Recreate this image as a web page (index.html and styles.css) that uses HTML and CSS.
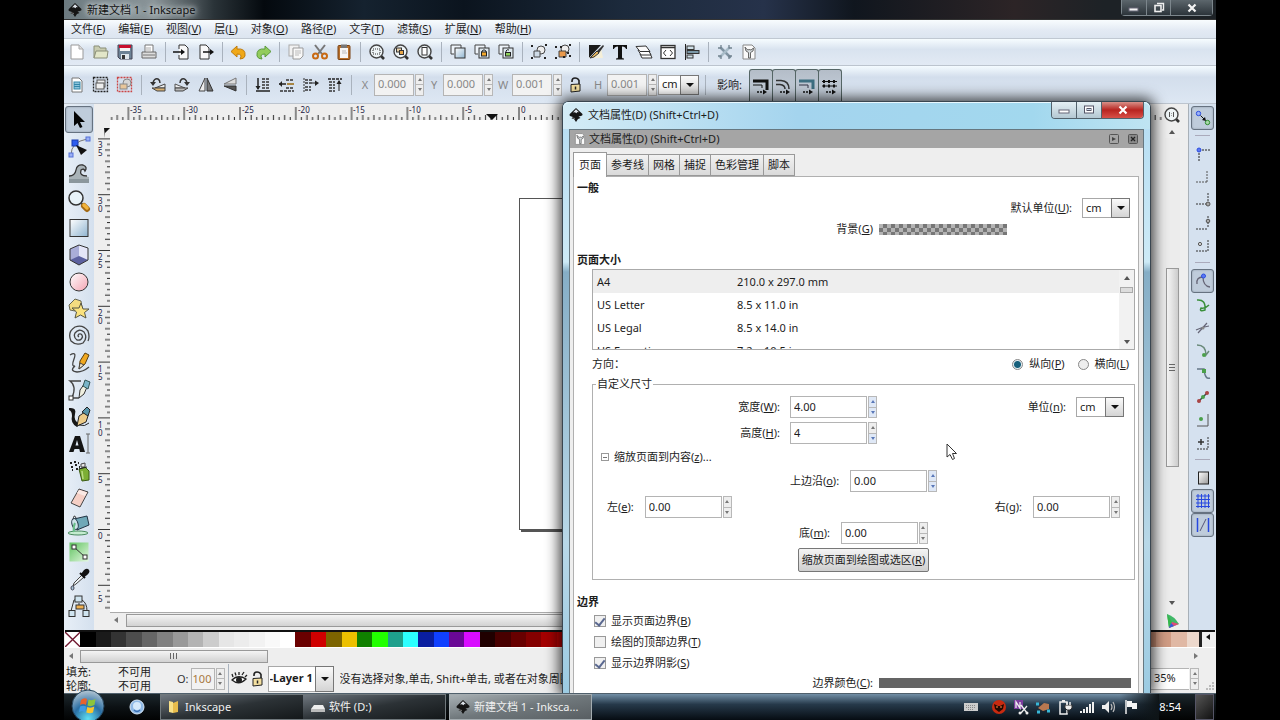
FILE: index.html
```html
<!DOCTYPE html>
<html lang="zh-CN">
<head>
<meta charset="utf-8">
<title>新建文档 1 - Inkscape</title>
<link rel="stylesheet" href="styles.css">
</head>
<body>
<svg width="0" height="0" class="defs" aria-hidden="true">
  <defs>
    <linearGradient id="gb" x1="0" y1="0" x2="1" y2="1"><stop offset="0" stop-color="#fff"/><stop offset="1" stop-color="#8fb4d0"/></linearGradient>
    <linearGradient id="gp" x1="0" y1="0" x2="1" y2="1"><stop offset="0" stop-color="#fff"/><stop offset="1" stop-color="#f3a3b2"/></linearGradient>
    <linearGradient id="gg" x1="0" y1="0" x2="1" y2="1"><stop offset="0" stop-color="#5fc25f"/><stop offset="1" stop-color="#e4f8e0"/></linearGradient>
    <linearGradient id="gw" x1="0" y1="0" x2="1" y2="1"><stop offset="0" stop-color="#fff"/><stop offset="1" stop-color="#999"/></linearGradient>
    <symbol id="ink" viewBox="0 0 14 14"><path d="M7 0L13.500 6Q14 7.500 12 8L9.500 8.500L11.500 10L9 11L7 14L5 11L2.500 10.500L4 9L1 8Q0 7 .8 6Z" fill="#151515"/><path d="M7 1.300L10 4.300L8.500 4L7.300 5.300L6 4.300L4 4.600Z" fill="#dde3ea"/><path d="M3 9.800L6 10.500" stroke="#777"/></symbol>
    <symbol id="lock" viewBox="0 0 18 18"><path d="M5 6V5Q5 2 8 2T12 4.500V8" fill="none" stroke="#222" stroke-width="1.600"/><path d="M4 8.500L13 8V15L4 16Z" fill="#f3dfa0" stroke="#222"/><path d="M8.500 10.500V13.500" stroke="#222" stroke-width="1.500"/></symbol>
    <symbol id="lens" viewBox="0 0 18 18"><path d="M12.500 12.500L16 16" stroke="#333" stroke-width="2.600"/><circle cx="8.500" cy="8.500" r="6.500" fill="#eef4f6" stroke="#444" stroke-width="1.400"/></symbol>
    <symbol id="docprefs" viewBox="0 0 18 18"><path d="M3 2H12L15 5V16H3Z" fill="#fafafa" stroke="#888"/><path d="M5 4L6 8L8.500 9.500V15H10.500V9.500L13 8L13.500 5L11 7L9 6.500L8 7L6.500 6Z" fill="#d7dde0" stroke="#666"/></symbol>
  </defs>
</svg>

<div class="screen">
  <header class="titlebar">
    <svg class="i14"><use href="#ink"/></svg><span class="glow">新建文档 1 - Inkscape</span>
    <div class="winbtns">
      <button aria-label="最小化"><svg width="12" height="10"><rect x="1" y="5" width="9" height="3" fill="#f4f4f4" stroke="#667"/></svg></button>
      <button aria-label="还原"><svg width="12" height="12"><path d="M4 1.500H10.500V8H9" fill="none" stroke="#eee" stroke-width="1.400"/><rect x="2" y="3.500" width="6" height="6" fill="none" stroke="#eee" stroke-width="1.600"/></svg></button>
      <button class="wide" aria-label="关闭"><svg width="12" height="10"><path d="M2.500 1.500L9.500 8.500M9.500 1.500L2.500 8.500" stroke="#f4f4f4" stroke-width="2.200"/></svg></button>
    </div>
  </header>

  <nav class="menubar">
    <button>文件(<u>F</u>)</button><button>编辑(<u>E</u>)</button><button>视图(<u>V</u>)</button><button>层(<u>L</u>)</button><button>对象(<u>O</u>)</button><button>路径(<u>P</u>)</button><button>文字(<u>T</u>)</button><button>滤镜(<u>S</u>)</button><button>扩展(<u>N</u>)</button><button>帮助(<u>H</u>)</button>
  </nav>

  <div class="bar cmds">
    <button aria-label="新建"><svg><path d="M3 2H11L15 6V16H3Z" fill="#fff" stroke="#999"/><path d="M11 2V6H15" fill="#ddd" stroke="#aaa"/></svg></button>
    <button aria-label="打开"><svg><path d="M2 15V3H7L8 5H14V9" fill="#c8ccb0" stroke="#8a8f78"/><path d="M4 8H16L15 15H2Z" fill="#e2e6c8" stroke="#8a8f78"/></svg></button>
    <button aria-label="保存"><svg><path d="M2 2H16V16H4L2 14Z" fill="#6d8295" stroke="#445"/><path d="M4 2H14V8H4Z" fill="#f4f4f4"/><path d="M3 2H15V5H3Z" fill="#c8102e"/><path d="M5 11H13V16H5Z" fill="#dfe6ec"/><path d="M6 12H9V16H6Z" fill="#333"/></svg></button>
    <button aria-label="打印"><svg><path d="M5 9V2H13V9" fill="#fff" stroke="#777"/><path d="M2 9H16V15H2Z" fill="#ddd" stroke="#666"/><path d="M3 12H15" stroke="#777"/><path d="M6 5H11M6 7H11" stroke="#aaa"/></svg></button>
    <i class="sep"></i>
    <button aria-label="导入"><svg><path d="M6 6V2H12L15 5V16H6V12" fill="#f8f8f8" stroke="#333"/><path d="M0 9H9" stroke="#111" stroke-width="1.500"/><path d="M8 6L12 9L8 12Z" fill="#111"/></svg></button>
    <button aria-label="导出"><svg><path d="M3 2H9L12 5V16H3Z" fill="#f8f8f8" stroke="#333"/><path d="M6 9H14" stroke="#111" stroke-width="1.500"/><path d="M13 6L17 9L13 12Z" fill="#111"/></svg></button>
    <i class="sep"></i>
    <button aria-label="撤销"><svg><path d="M7 3V6Q16 5 15 13Q14 16 10 16Q13 11 7 11V14L1 8.500Z" fill="#f0a818" stroke="#bf7c0c"/></svg></button>
    <button aria-label="重做"><svg><path d="M11 3V6Q2 5 3 13Q4 16 8 16Q5 11 11 11V14L17 8.500Z" fill="#93cc5c" stroke="#5b9a3c"/></svg></button>
    <i class="sep"></i>
    <button aria-label="复制"><svg><rect x="2" y="2" width="10" height="11" fill="#f2f2f2" stroke="#aaa"/><path d="M6 5H16V13L13 16H6Z" fill="#f8f8f8" stroke="#999"/><path d="M8 8H14M8 10H14M8 12H12" stroke="#bbb"/></svg></button>
    <button aria-label="剪切"><svg><path d="M4 2L11 11M14 2L7 11" stroke="#777" stroke-width="2"/><circle cx="4.500" cy="13" r="2.500" fill="none" stroke="#c86a14" stroke-width="2"/><circle cx="13.500" cy="13" r="2.500" fill="none" stroke="#c86a14" stroke-width="2"/></svg></button>
    <button aria-label="粘贴"><svg><rect x="3" y="2.500" width="12" height="14" rx="1" fill="#b8702c" stroke="#7a4314"/><path d="M5 5H13V15H5Z" fill="#f6f6f6"/><path d="M6 1.500H12V5H6Z" fill="#777"/><path d="M7 8H11M7 10H12" stroke="#bbb"/></svg></button>
    <i class="sep"></i>
    <button aria-label="缩放选区"><svg><use href="#lens"/><rect x="5" y="6" width="7" height="5" fill="none" stroke="#333" stroke-dasharray="1 1"/></svg></button>
    <button aria-label="缩放绘图"><svg><use href="#lens"/><rect x="4.500" y="5" width="5" height="4" fill="#e6cfa8" stroke="#333"/><rect x="7.500" y="7.500" width="4" height="4" fill="#e8a548" stroke="#333"/></svg></button>
    <button aria-label="缩放页面"><svg><use href="#lens"/><rect x="6" y="4.500" width="5" height="7.500" fill="#fff" stroke="#333"/></svg></button>
    <i class="sep"></i>
    <button aria-label="再制"><svg><path d="M5 11H2V2H12V5" fill="#eef4fa" stroke="#444"/><rect x="6" y="5" width="10" height="10" fill="url(#gb)" stroke="#333"/></svg></button>
    <button aria-label="克隆"><svg><path d="M5 11H2V2H12V5" fill="#eef4fa" stroke="#444"/><rect x="6" y="5" width="10" height="10" fill="#dfe9ef" stroke="#333"/><path d="M9 9V8Q11 5.500 13 8V9" fill="none" stroke="#222"/><rect x="8.500" y="9" width="5" height="4" fill="#f3a82c" stroke="#222"/></svg></button>
    <button aria-label="断开克隆"><svg><path d="M5 11H2V2H12V5" fill="#eef4fa" stroke="#444"/><rect x="6" y="5" width="10" height="10" fill="#dfe9ef" stroke="#333"/><path d="M9 9V8Q10 6 12 7" fill="none" stroke="#222"/><rect x="8.500" y="9.500" width="5" height="3.500" fill="#8fd05a" stroke="#222"/></svg></button>
    <i class="sep"></i>
    <button aria-label="群组"><svg><circle cx="11" cy="7" r="4" fill="#eee" stroke="#444"/><path d="M4 8H10V14H4Z" fill="#cfdbe6" stroke="#444"/><path d="M1 2H3V4H1ZM15 1H17V3H15ZM1 14H3V16H1ZM14 14H16V16H14Z" fill="#222"/></svg></button>
    <button aria-label="解散群组"><svg><circle cx="11" cy="6" r="4" fill="#eee" stroke="#444"/><path d="M5 8H12V14H5Z" fill="#e99a4d" stroke="#444"/><path d="M1 3H3V5H1ZM6 3H8V5H6ZM15 1H17V3H15ZM1 14H3V16H1ZM15 12H17V14H15ZM9 13H11V15H9ZM13 9H15V11H13Z" fill="#222"/></svg></button>
    <i class="sep"></i>
    <button aria-label="填充和轮廓"><svg><path d="M2 2H14L2 15Z" fill="#1a1a1a"/><path d="M2 15L14 5L16 15Z" fill="#f5efd8"/><path d="M3 15L10 8L12 10L7 14Z" fill="#e8b860" stroke="#333"/><path d="M10 8L16 2L17 3L12 10Z" fill="#333"/></svg></button>
    <button aria-label="文字和字体"><svg><path d="M2 2H16V6H15Q14.500 3.500 11 3.500V14.500Q11 15.500 13 15.500V16.500H5V15.500Q7 15.500 7 14.500V3.500Q3.500 3.500 3 6H2Z" fill="#111"/></svg></button>
    <button aria-label="图层"><svg><path d="M5 11L15 10L17 15H7Z" fill="#fff" stroke="#333"/><path d="M3 7L13 6.500L16 12H6Z" fill="#fff" stroke="#333"/><path d="M1 3.500L11 3L15 8.500H5Z" fill="#fafafa" stroke="#333"/></svg></button>
    <button aria-label="XML编辑器"><svg><rect x="2" y="2.500" width="14" height="13" fill="#fff" stroke="#333" stroke-width="1.300"/><path d="M2 4.500H16" stroke="#333" stroke-width="1.500"/><path d="M7 7L4.500 10L7 13M11 7L13.500 10L11 13" fill="none" stroke="#333"/></svg></button>
    <button aria-label="对齐和分布"><svg><path d="M2.500 1V17" stroke="#222"/><rect x="4" y="3" width="7" height="3.500" fill="#cfe0e8" stroke="#333"/><rect x="4" y="7.500" width="12" height="3" fill="#7a98a8" stroke="#333"/><rect x="4" y="12" width="6" height="3" fill="#cfe0e8" stroke="#333"/></svg></button>
    <i class="sep"></i>
    <button aria-label="首选项"><svg><path d="M5 5L14 14" stroke="#8094a2" stroke-width="2.500" stroke-linecap="round"/><path d="M13 5L4 14" stroke="#a8bcc8" stroke-width="2.500" stroke-linecap="round"/><path d="M2 5L5 5L5 2M13 2V5H16M2 13H5V16M13 16V13H16" fill="none" stroke="#71838f" stroke-width="1.300"/></svg></button>
    <button aria-label="文档属性"><svg><use href="#docprefs"/></svg></button>
  </div>

  <div class="bar ctrl">
    <button aria-label="全选"><svg><path d="M4 2H11L14 5V16H4Z" fill="#fff" stroke="#777"/><rect x="6" y="6" width="6" height="7" fill="#8cc4dc" stroke="#3486a8"/><path d="M6 8.500H12M6 10.500H12" stroke="#3486a8"/></svg></button>
    <button aria-label="全部图层"><svg><rect x="1.500" y="1.500" width="14" height="14" fill="none" stroke="#222" stroke-width="1.300" stroke-dasharray="2 1"/><rect x="5" y="4" width="8" height="7" fill="#eee" stroke="#555"/><rect x="4" y="7" width="8" height="6" fill="#eee" stroke="#555"/></svg></button>
    <button aria-label="取消选择"><svg><rect x="1.500" y="1.500" width="14" height="14" fill="none" stroke="#c44" stroke-width="1.300" stroke-dasharray="2 1"/><circle cx="11" cy="7" r="4" fill="#d5d5d5" stroke="#888"/><rect x="4" y="8" width="7" height="5" fill="#e8c69a" stroke="#888"/></svg></button>
    <i class="sep"></i>
    <button aria-label="逆时针旋转"><svg><path d="M4 7Q5 2 9 3Q11 4 11 7" fill="none" stroke="#333" stroke-width="1.500"/><path d="M1 6H7L4 10Z" fill="#333"/><path d="M6 12L16 8V12Z" fill="#eee" stroke="#444"/><path d="M3 12H16V15H8Z" fill="#d8b070" stroke="#444"/></svg></button>
    <button aria-label="顺时针旋转"><svg><path d="M7 7Q7 4 9 3Q13 2 14 7" fill="none" stroke="#333" stroke-width="1.500"/><path d="M11 6H17L14 10Z" fill="#333"/><path d="M2 8L12 12H2Z" fill="#eee" stroke="#555"/><path d="M2 12H15L10 15H2Z" fill="#bbb" stroke="#444"/></svg></button>
    <button aria-label="水平翻转"><svg><path d="M8 2V15H2Z" fill="#eee" stroke="#444"/><path d="M10 2V15H16Z" fill="#777" stroke="#333"/></svg></button>
    <button aria-label="垂直翻转"><svg><path d="M15 2V8H3Z" fill="#ddd" stroke="#777"/><path d="M15 10V15L3 10Z" fill="#555" stroke="#333"/></svg></button>
    <i class="sep"></i>
    <button aria-label="置底"><svg><path d="M4 2V13" stroke="#222" stroke-width="1.500"/><path d="M1.500 10H6.500L4 14Z" fill="#222"/><path d="M8 3H15M8 6H15M8 9H15M8 12H15" stroke="#333" stroke-width="1.600" stroke-dasharray="3 1"/><path d="M2 15H16" stroke="#222" stroke-width="1.500"/></svg></button>
    <button aria-label="下移"><svg><path d="M1 8H8" stroke="#222" stroke-width="1.500"/><path d="M4 5L1 8L4 11Z" fill="#222"/><path d="M8 4H16M8 12H16M2 15H16" stroke="#333" stroke-width="1.600" stroke-dasharray="3 1"/><path d="M9 8H16" stroke="#a98643" stroke-width="2"/></svg></button>
    <button aria-label="上移"><svg><path d="M2 2V16" stroke="#333" stroke-dasharray="2 1"/><path d="M3 4H10M3 7H10M3 11H9M3 14H9" stroke="#333" stroke-width="1.600" stroke-dasharray="3 1"/><path d="M10 7H15" stroke="#222"/><path d="M13 4.500L17 7L13 10Z" fill="#222"/></svg></button>
    <button aria-label="置顶"><svg><path d="M2 3H16" stroke="#222" stroke-width="1.600" stroke-dasharray="3 1"/><path d="M3 6H9M3 9H9M3 12H9M3 15H9" stroke="#333" stroke-width="1.600" stroke-dasharray="3 1"/><path d="M13 5V15" stroke="#222"/><path d="M10.500 8H15.500L13 4Z" fill="#222"/></svg></button>
    <i class="sep"></i>
    <label class="field dim"><b>X</b><span class="spin s40"><input value="0.000"><span class="steps"><i></i><i></i></span></span></label>
    <label class="field dim"><b>Y</b><span class="spin s40"><input value="0.000"><span class="steps"><i></i><i></i></span></span></label>
    <label class="field dim"><b>W</b><span class="spin s40"><input value="0.001"><span class="steps"><i></i><i></i></span></span></label>
    <button aria-label="锁定比例" class="lockbtn"><svg><use href="#lock"/></svg></button>
    <label class="field dim"><b>H</b><span class="spin s40"><input value="0.001"><span class="steps"><i></i><i></i></span></span></label>
    <span class="drop"><select aria-label="单位"><option>cm</option></select></span>
    <i class="sep late"></i>
    <span class="affect">影响:</span>
    <div class="toggles">
      <button aria-label="缩放轮廓"><svg><path d="M1 3H15V12" fill="none" stroke="#111" stroke-width="3"/><path d="M1 7H10V10" fill="none" stroke="#111"/><path d="M5 14H11" stroke="#111" stroke-dasharray="2 1" stroke-width="1.500"/><path d="M11 11.500L15 14L11 16.500Z" fill="#111"/></svg></button>
      <button aria-label="缩放圆角"><svg><path d="M1 2.500H6Q14 3 14 11M1 6.500H5Q10 7 10 11" fill="none" stroke="#333" stroke-width="1.500"/><path d="M5 14H11" stroke="#111" stroke-dasharray="2 1" stroke-width="1.500"/><path d="M11 11.500L15 14L11 16.500Z" fill="#111"/></svg></button>
      <button aria-label="移动渐变"><svg><path d="M1 3H15V11" fill="none" stroke="#3d6e80" stroke-width="3"/><path d="M1 7H10V10" fill="none" stroke="#334"/><path d="M5 14H11" stroke="#111" stroke-dasharray="2 1" stroke-width="1.500"/><path d="M11 11.500L15 14L11 16.500Z" fill="#111"/></svg></button>
      <button aria-label="移动图案"><svg><path d="M1 3.500H16M1 8H16" stroke="#111"/><path d="M2 2H4V5H2ZM7 2H9V5H7ZM12 2H14V5H12ZM2 6.500H4V9.500H2ZM7 6.500H9V9.500H7ZM12 6.500H14V9.500H12Z" fill="#111"/><path d="M5 14H11" stroke="#111" stroke-dasharray="2 1" stroke-width="1.500"/><path d="M11 11.500L15 14L11 16.500Z" fill="#111"/></svg></button>
    </div>
  </div>

  <main class="middle">
    <aside class="toolbox">
      <button class="on" aria-label="选择"><svg viewBox="0 0 24 24"><path d="M7 3V18L10.500 15L13 20L15.500 19L13 14H18Z" fill="#050505"/></svg></button>
      <button aria-label="节点"><svg viewBox="0 0 24 24"><path d="M4 20Q4 7 20 4" fill="none" stroke="#777"/><rect x="5" y="5" width="6" height="6" fill="#2c5cf0" stroke="#1a3cae"/><rect x="19" y="2" width="4" height="4" fill="#9bb0f4" stroke="#5470d8"/><rect x="2" y="18" width="4" height="4" fill="#9bb0f4" stroke="#5470d8"/><path d="M9 10L20 15L14 20Z" fill="#111"/></svg></button>
      <button aria-label="扭曲"><svg viewBox="0 0 24 24"><path d="M2 14Q8 14 9 8Q10 2 16 3Q21 5 18 9Q17 6 14 8Q13 14 22 15V21H2Z" fill="#a9b3b8"/><path d="M2 17H22V21H2Z" fill="#8b979d"/><path d="M2 14Q8 14 9 8Q10 2 16 3Q21 5 18 9Q17 6 14 8Q12 14 20 14" fill="none" stroke="#333" stroke-width="1.300"/></svg></button>
      <button aria-label="缩放"><svg viewBox="0 0 24 24"><circle cx="9" cy="9" r="7" fill="#e8f3f9" stroke="#333" stroke-width="1.500"/><path d="M14 14L16 16" stroke="#444" stroke-width="2"/><path d="M17 17L20 20" stroke="#a36a14" stroke-width="6" stroke-linecap="round"/><path d="M17 16L20 19" stroke="#f2b43c" stroke-width="3.500" stroke-linecap="round"/></svg></button>
      <button aria-label="矩形"><svg viewBox="0 0 24 24"><rect x="3" y="3.500" width="18" height="17" fill="url(#gb)" stroke="#333"/></svg></button>
      <button aria-label="3D盒"><svg viewBox="0 0 24 24"><path d="M12 2L21 5V17L12 22L3 17V6Z" fill="#e4e6f8"/><path d="M3 6L12 2V14L3 17Z" fill="#a9add8"/><path d="M3 17L12 13L21 17L12 22Z" fill="#5c61a0"/><path d="M12 2L21 5V17L12 22L3 17V6Z" fill="none" stroke="#333"/></svg></button>
      <button aria-label="椭圆"><svg viewBox="0 0 24 24"><circle cx="12" cy="12" r="9" fill="url(#gp)" stroke="#333"/></svg></button>
      <button aria-label="星形"><svg viewBox="0 0 24 24"><path d="M2 8L8 2L14 4L15 11L8 14L3 13Z" fill="#f4dc80" stroke="#665"/><path d="M14 6L16 12L22 12L17.500 15.500L19 21L13.500 18L8 21L9.500 15L5 11L12 11Z" fill="#fae27e" stroke="#554"/></svg></button>
      <button aria-label="螺旋"><svg viewBox="0 0 24 24"><path d="M12 13Q10 12 12 10Q15 9 15.500 13Q14 17 10 16Q6 13 8 9Q12 4 17 8Q21 14 16 19Q9 22 4 17Q0 8 8 3Q16 0 21 7Q23 13 21 17" fill="none" stroke="#444" stroke-width="1.300"/></svg></button>
      <button aria-label="铅笔"><svg viewBox="0 0 24 24"><path d="M3 4Q10 0 7 8T8 15Q2 20 10 21Q16 21 22 16" fill="none" stroke="#444" stroke-width="1.300"/><path d="M12 18L13 10L18 2L22 4L18 13Z" fill="#f0a820" stroke="#5a4010"/><path d="M12 18L13 12L17 14Z" fill="#f7e4c0" stroke="#444"/></svg></button>
      <button aria-label="钢笔"><svg viewBox="0 0 24 24"><path d="M12 20H5Q10 8 3 3H14" fill="none" stroke="#444" stroke-width="1.300"/><rect x="2" y="18" width="4" height="4" fill="#fff" stroke="#333"/><path d="M12 20L13 12L18 5L20 9L17 16Z" fill="#f0f0e0" stroke="#333"/><path d="M16 8L18 2L23 4L21 11Z" fill="#79b5c8" stroke="#355"/></svg></button>
      <button aria-label="书法"><svg viewBox="0 0 24 24"><path d="M2 3Q10 2 8 9T13 19L10 22Q3 18 5 11Q5 6 2 5Z" fill="#161616"/><path d="M10 21L12 11L18 7L21 11L19 17Z" fill="#eccb88" stroke="#222"/><path d="M15 7L20 2L23 5L21 11Z" fill="#5895aa" stroke="#222"/><path d="M12 20Q18 22 22 18" fill="none" stroke="#222"/></svg></button>
      <button aria-label="文字"><svg viewBox="0 0 24 24"><path d="M2 20L8 4H13L18 20H13L12.300 17H7.500L6.500 20ZM8.500 13.500H11.500L10 8Z" fill="#141414" fill-rule="evenodd"/><path d="M19 2H23M21 2V21M19 21H23" stroke="#666"/></svg></button>
      <button aria-label="喷绘"><svg viewBox="0 0 24 24"><path d="M3 4H5M7 3H9M4 8H6M8 6H10M9 10H11M5 11H6M11 4H12M12 8H13" stroke="#222" stroke-width="2"/><path d="M12 10L18 8L22 12V21L15 22Z" fill="#7cae34" stroke="#3c5c14"/><path d="M14 8V5L18 4V8Z" fill="#e8e8e8" stroke="#444"/><path d="M12 10L20 8" stroke="#222"/><path d="M15 12L16 20" stroke="#b9dc80" stroke-width="1.500"/></svg></button>
      <button aria-label="橡皮擦"><svg viewBox="0 0 24 24"><path d="M12 3L21 6L13 21L4 17Z" fill="#f5cfc5" stroke="#444"/><path d="M12 4L20 6.500L18 10L10 7Z" fill="#fbe9e4"/></svg></button>
      <button aria-label="油漆桶"><svg viewBox="0 0 24 24"><ellipse cx="11" cy="20" rx="10" ry="2" fill="#c4ecd0" stroke="#4a8a60"/><path d="M7 6L20 3L22 12L10 17Z" fill="#6fa8b8" stroke="#234"/><path d="M6 7Q7 0 9 5" fill="none" stroke="#333"/><ellipse cx="8" cy="11" rx="3" ry="5.500" fill="#cfe4ea" stroke="#234" transform="rotate(-16 8 11)"/><path d="M8 10Q6 14 7 19" fill="none" stroke="#69bd88" stroke-width="2"/></svg></button>
      <button aria-label="渐变"><svg viewBox="0 0 24 24"><rect x="2.500" y="2.500" width="19" height="19" fill="url(#gg)"/><path d="M7 7L18 17" stroke="#333"/><rect x="5" y="5" width="4" height="4" fill="#fff" stroke="#333"/><rect x="16" y="15" width="4" height="4" fill="#fff" stroke="#333"/></svg></button>
      <button aria-label="取色器"><svg viewBox="0 0 24 24"><path d="M15 8L7 16L6 19L9 17L17 10" fill="#eef3f6" stroke="#444"/><path d="M13 6L18 11" stroke="#111" stroke-width="2"/><path d="M14 7L17 3Q21 0 22.500 4Q22.500 7 17 10Z" fill="#111"/><ellipse cx="5.500" cy="21" rx="1.500" ry="2" fill="#aac8da" stroke="#445"/></svg></button>
      <button aria-label="连接器"><svg viewBox="0 0 24 24"><path d="M9 6H7L4 17M15 6Q20 9 20 17M12 9V11" fill="none" stroke="#333"/><rect x="8" y="2" width="7" height="6" fill="#cfe4f0" stroke="#333"/><rect x="9" y="11" width="8" height="4" fill="#f0b050" stroke="#333"/><rect x="2" y="16.500" width="6" height="6" fill="#cfe4f0" stroke="#333"/><rect x="16" y="16.500" width="6" height="6" fill="#cfe4f0" stroke="#333"/></svg></button>
    </aside>

    <section class="work">
      <svg class="hruler">
        <defs><pattern id="ph" x="408" y="0" width="55.800" height="16" patternUnits="userSpaceOnUse"><path d="M1 3V16" stroke="#222"/><path d="M12.160 11V16M23.320 11V16M34.480 11V16M45.640 11V16" stroke="#222"/><path d="M6.580 13V16M17.740 13V16M28.900 13V16M40.060 13V16M51.220 13V16" stroke="#222"/></pattern></defs>
        <rect width="100%" height="16" fill="url(#ph)"/>
        <path d="M376 10H388L382 16Z" fill="#111"/>
        <g><text x="20" y="9">-35</text><text x="76" y="9">-30</text><text x="132" y="9">-25</text><text x="188" y="9">-20</text><text x="243" y="9">-15</text><text x="299" y="9">-10</text><text x="355" y="9">-5</text><text x="411" y="9">0</text></g>
      </svg>
      <svg class="vruler">
        <defs><pattern id="pv" x="0" y="408" width="16" height="55.800" patternUnits="userSpaceOnUse"><path d="M4 1.500H16" stroke="#333"/><path d="M11 12.660H16M11 23.820H16M11 34.980H16M11 46.140H16" stroke="#222"/><path d="M13 7H16M13 18.200H16M13 29.400H16M13 40.500H16M13 51.700H16" stroke="#222"/></pattern></defs>
        <rect y="16" width="16" height="100%" fill="url(#pv)"/>
        <path d="M10 8H16L11 13V18L10 8Z" fill="#111"/>
        <g><text y="28"><tspan x="4">3</tspan><tspan x="4" dy="8">5</tspan></text><text y="84"><tspan x="4">3</tspan><tspan x="4" dy="8">0</tspan></text><text y="140"><tspan x="4">2</tspan><tspan x="4" dy="8">5</tspan></text><text y="196"><tspan x="4">2</tspan><tspan x="4" dy="8">0</tspan></text><text y="252"><tspan x="4">1</tspan><tspan x="4" dy="8">5</tspan></text><text y="308"><tspan x="4">1</tspan><tspan x="4" dy="8">0</tspan></text><text x="4" y="363">5</text><text x="4" y="419">0</text><text y="474"><tspan x="4">-</tspan><tspan x="4" dy="8">5</tspan></text></g>
      </svg>
      <svg class="canvas"><rect x="411" y="80" width="234" height="332" fill="#555"/><rect x="409.500" y="78.500" width="234" height="331" fill="#fff" stroke="#555"/></svg>
      <div class="hscroll"><i class="ar left"></i><div class="thumb"></div><i class="ar right"></i></div>
      <div class="vscroll">
        <svg width="18" height="18"><use href="#lens"/><path d="M6.500 6V11M10.500 6V11M8.500 7.500V8M8.500 9.500V10" stroke="#555"/></svg>
        <i class="ar up"></i><div class="track"><div class="thumb"><i></i></div></div><i class="ar down"></i>
        <svg width="16" height="16" class="cms"><path d="M3 1Q10 3 15 11L5 15Z" fill="#41b868"/><path d="M3 1L8 9L5 15Z" fill="#36b84c"/><path d="M15 11L5 15L8 9Z" fill="#e14a78"/><path d="M5 15L7 10L10 13Z" fill="#345bdc"/></svg>
      </div>
    </section>

    <aside class="snapbar">
      <button class="on" aria-label="启用捕捉"><svg viewBox="0 0 16 16"><circle cx="3.500" cy="3.500" r="2.200" fill="#9ab0f6" stroke="#2c4fe0"/><circle cx="12.500" cy="12.500" r="2.200" fill="#a8d8a8" stroke="#2f8a2f"/><path d="M5.500 5.500L9 9" stroke="#111"/><path d="M7 10L11 11L10 7Z" fill="#111"/></svg></button>
      <i></i>
      <button aria-label="捕捉边框"><svg viewBox="0 0 16 16"><path d="M4 4H15M4 4V15" stroke="#222" stroke-dasharray="2 1" fill="none"/><circle cx="4" cy="4" r="2" fill="#5c78f4" stroke="#2c4fe0"/></svg></button>
      <button aria-label="捕捉边框边"><svg viewBox="0 0 16 16"><path d="M12 2V13M1 13H12" stroke="#555" stroke-dasharray="2 1" fill="none"/></svg></button>
      <button aria-label="捕捉边框角"><svg viewBox="0 0 16 16"><path d="M13 1V12M1 12H13" stroke="#333" stroke-dasharray="2 1" fill="none"/><circle cx="13" cy="12" r="2" fill="#aaa" stroke="#555"/></svg></button>
      <button aria-label="捕捉边中点"><svg viewBox="0 0 16 16"><path d="M13 1V13M1 14H13" stroke="#333" stroke-dasharray="2 1" fill="none"/><circle cx="13" cy="6" r="1.800" fill="#aaa" stroke="#555"/></svg></button>
      <button aria-label="捕捉边框中心"><svg viewBox="0 0 16 16"><path d="M13 2V13M1 13H13" stroke="#333" stroke-dasharray="2 1" fill="none"/><circle cx="5" cy="6" r="1.600" fill="#ddd" stroke="#555"/></svg></button>
      <i></i>
      <button class="on" aria-label="捕捉节点"><svg viewBox="0 0 16 16"><path d="M2 11Q1 4 8 4Q8 13 15 14" stroke="#667" fill="none" stroke-width="1.300"/><circle cx="8.500" cy="3" r="2" fill="#5c78f4" stroke="#2c4fe0"/></svg></button>
      <button aria-label="捕捉路径"><svg viewBox="0 0 16 16"><path d="M2 3Q11 2 10 13Q4 15 6 11Q10 12 14 8" stroke="#3a8f3a" fill="none" stroke-width="1.500"/></svg></button>
      <button aria-label="捕捉交点"><svg viewBox="0 0 16 16"><path d="M3 13L12 3M1 10Q7 7 14 6" stroke="#667" fill="none" stroke-width="1.200"/><circle cx="8" cy="8" r="1.500" fill="#888"/></svg></button>
      <button aria-label="捕捉尖节点"><svg viewBox="0 0 16 16"><path d="M2 2Q11 2 11 12L14 8" stroke="#6a8a7a" fill="none" stroke-width="1.500"/><circle cx="9" cy="12" r="2" fill="#4aa04a"/></svg></button>
      <button aria-label="捕捉平滑节点"><svg viewBox="0 0 16 16"><path d="M2 3H9Q10 14 15 12" stroke="#678" fill="none" stroke-width="1.500"/><rect x="7" y="3" width="4" height="4" fill="#4aa04a"/></svg></button>
      <button aria-label="捕捉线中点"><svg viewBox="0 0 16 16"><path d="M3 13L13 3" stroke="#344" stroke-width="1.500"/><circle cx="4" cy="12" r="2" fill="#a44"/><circle cx="8" cy="8" r="2" fill="#4aa04a"/><circle cx="12" cy="4" r="2" fill="#a44"/></svg></button>
      <button aria-label="捕捉物体中心"><svg viewBox="0 0 16 16"><path d="M13 2V14H2" stroke="#555" fill="none"/><circle cx="6" cy="7" r="2" fill="#4aa04a"/></svg></button>
      <button aria-label="捕捉旋转中心"><svg viewBox="0 0 16 16"><path d="M13 2V14H2" stroke="#333" fill="none" stroke-dasharray="2 1"/><path d="M6 4V10M3 7H9" stroke="#333" stroke-width="1.500"/></svg></button>
      <i></i>
      <button aria-label="捕捉页面边框"><svg viewBox="0 0 16 16"><rect x="3.500" y="2" width="10" height="12" fill="url(#gw)" stroke="#222"/></svg></button>
      <button class="on" aria-label="捕捉网格"><svg viewBox="0 0 16 16"><path d="M3 1V15M6.500 1V15M10 1V15M13.500 1V15M1 3H15M1 6.500H15M1 10H15M1 13.500H15" stroke="#2748e0"/></svg></button>
      <button class="on" aria-label="捕捉参考线"><svg viewBox="0 0 16 16"><path d="M2.500 1V15M13.500 1V15" stroke="#2748e0" stroke-width="1.500"/><path d="M5 14L11 2" stroke="#557"/></svg></button>
    </aside>
  </main>

  <div class="palette">
    <svg class="none" viewBox="0 0 16 16" preserveAspectRatio="none"><rect width="16" height="16" fill="#fff"/><path d="M0 0L16 16M16 0L0 16" stroke="#701830" stroke-width="1.500"/></svg>
    <i class="c0"></i><i class="c1"></i><i class="c2"></i><i class="c3"></i><i class="c4"></i><i class="c5"></i><i class="c6"></i><i class="c7"></i><i class="c8"></i><i class="c9"></i><i class="c10"></i><i class="c11"></i><i class="c12"></i><i class="c13"></i>
    <i class="d0"></i><i class="d1"></i><i class="d2"></i><i class="d3"></i><i class="d4"></i><i class="d5"></i><i class="d6"></i><i class="d7"></i><i class="d8"></i><i class="d9"></i><i class="d10"></i><i class="d11"></i>
    <i class="r0"></i><i class="r1"></i><i class="r2"></i><i class="r3"></i><i class="r4"></i><i class="r5"></i>
    <i class="k0"></i><i class="k1"></i><i class="k2"></i><i class="k3"></i>
    <i class="ar left more"></i>
  </div>
  <div class="palscroll"><i class="ar left"></i><div class="thumb"><i></i></div><i class="ar right"></i></div>

  <footer class="status">
    <dl><dt>填充:</dt><dd>不可用</dd><dt>轮廓:</dt><dd>不可用</dd></dl>
    <label class="field opac dim">O:<span class="spin"><input value="100"><span class="steps"><i></i><i></i></span></span></label>
    <i class="sep"></i>
    <button aria-label="显示图层"><svg><path d="M2 10Q8 4 16 9Q9 16 2 10Z" fill="#fff" stroke="#222" stroke-width="1.300"/><circle cx="9" cy="10" r="3" fill="#222"/><path d="M3 7L2 4M6 5.500L5 2.500M9 5V2M12 5L14 2M15 7L17 5" stroke="#222" stroke-width="1.300"/></svg></button>
    <button aria-label="锁定图层"><svg><use href="#lock"/></svg></button>
    <span class="drop layer"><select aria-label="图层"><option>-Layer 1</option></select></span>
    <span class="msg">没有选择对象,单击, Shift+单击, 或者在对象周围拖动选择。</span>
    <label class="spin zoom"><input aria-label="缩放" value="35%"><span class="steps"><i></i><i></i></span></label>
    <svg class="grip"><path d="M10 4H12M7 7H9M10 7H12M4 10H6M7 10H9M10 10H12" stroke="#bbb" stroke-width="2"/></svg>
  </footer>

  <section class="dialog" aria-label="文档属性">
    <header class="dtitle">
      <svg class="i14"><use href="#ink"/></svg><span>文档属性(D) (Shift+Ctrl+D)</span>
      <div class="dbtns">
        <button aria-label="最小化"><svg width="12" height="10"><rect x="1" y="5" width="10" height="3" fill="#fff" stroke="#667"/></svg></button>
        <button aria-label="最大化"><svg width="12" height="10"><rect x="1.500" y="1" width="9" height="7" fill="#fff" stroke="#556"/><rect x="4" y="3.500" width="4" height="2" fill="#cde" stroke="#556"/></svg></button>
        <button class="close" aria-label="关闭"><svg width="12" height="10"><path d="M2.500 1.500L9.500 8.500M9.500 1.500L2.500 8.500" stroke="#fff" stroke-width="2.200"/></svg></button>
      </div>
    </header>
    <div class="dbody">
      <div class="dockhead">
        <svg class="i14"><use href="#docprefs"/></svg><span>文档属性(D) (Shift+Ctrl+D)</span>
        <button aria-label="图标化"><svg width="10" height="10"><rect x=".5" y=".5" width="9" height="9" rx="1" fill="none" stroke="#555"/><path d="M3 3L7 5L3 7Z" fill="#444"/></svg></button>
        <button aria-label="关闭面板"><svg width="10" height="10"><rect x=".5" y=".5" width="9" height="9" rx="1" fill="#888" stroke="#555"/><path d="M3 3L7 7M7 3L3 7" stroke="#222" stroke-width="1.300"/></svg></button>
      </div>
      <div class="tabs" role="tablist">
        <button class="cur" role="tab">页面</button><button role="tab">参考线</button><button role="tab">网格</button><button role="tab">捕捉</button><button role="tab">色彩管理</button><button role="tab">脚本</button>
      </div>
      <div class="page">
        <h2>一般</h2>
        <div class="row unit"><label for="du">默认单位(<u>U</u>):</label><span class="drop"><select id="du"><option>cm</option></select></span></div>
        <div class="color"><span>背景(<u>G</u>)</span><button class="checker" aria-label="背景"></button></div>
        <h2 class="mt">页面大小</h2>
        <div class="list">
          <div class="scroller">
            <table><tbody>
              <tr class="sel"><td>A4</td><td>210.0 x 297.0 mm</td></tr>
              <tr><td>US Letter</td><td>8.5 x 11.0 in</td></tr>
              <tr><td>US Legal</td><td>8.5 x 14.0 in</td></tr>
              <tr><td>US Executive</td><td>7.2 x 10.5 in</td></tr>
            </tbody></table>
          </div>
          <div class="lscroll"><i class="ar up"></i><div class="thumb"></div><i class="ar down"></i></div>
        </div>
        <div class="row orient">
          <span class="name">方向：</span>
          <label><input type="radio" name="o" checked><span>纵向(<u>P</u>)</span></label>
          <label><input type="radio" name="o"><span>横向(<u>L</u>)</span></label>
        </div>
        <fieldset>
          <legend>自定义尺寸</legend>
          <div class="size">
            <label for="w">宽度(<u>W</u>):</label><span class="spin"><input id="w" value="4.00"><span class="steps blue"><i></i><i></i></span></span>
            <label for="cu">单位(<u>n</u>):</label><span class="drop"><select id="cu"><option>cm</option></select></span>
          </div>
          <div class="size">
            <label for="h">高度(<u>H</u>):</label><span class="spin"><input id="h" value="4"><span class="steps low"><i></i><i></i></span></span>
          </div>
          <button class="expander"><i></i><span>缩放页面到内容(<u>z</u>)...</span></button>
          <div class="mid"><label for="t">上边沿(<u>o</u>):</label><span class="spin"><input id="t" value="0.00"><span class="steps blue"><i></i><i></i></span></span></div>
          <div class="sides">
            <div><label for="l">左(<u>e</u>):</label><span class="spin"><input id="l" value="0.00"><span class="steps"><i></i><i></i></span></span></div>
            <div><label for="r">右(<u>g</u>):</label><span class="spin"><input id="r" value="0.00"><span class="steps"><i></i><i></i></span></span></div>
          </div>
          <div class="mid"><label for="b">底(<u>m</u>):</label><span class="spin"><input id="b" value="0.00"><span class="steps"><i></i><i></i></span></span></div>
          <div class="mid"><button class="push">缩放页面到绘图或选区(<u>R</u>)</button></div>
        </fieldset>
        <h2 class="mt2">边界</h2>
        <label class="check"><input type="checkbox" checked><span>显示页面边界(<u>B</u>)</span></label>
        <label class="check"><input type="checkbox"><span>绘图的顶部边界(<u>T</u>)</span></label>
        <label class="check"><input type="checkbox" checked><span>显示边界阴影(<u>S</u>)</span></label>
        <div class="color last"><span>边界颜色(<u>C</u>):</span><button class="solid" aria-label="边界颜色"></button></div>
      </div>
    </div>
  </section>

  <svg class="cursor" width="12" height="18"><path d="M1 1V14L4 11.500L6.500 16.500L8.500 15.500L6.500 10.500H10.500Z" fill="#fff" stroke="#333"/></svg>

  <div class="taskbar">
    <button class="orb" aria-label="开始"><svg viewBox="0 0 34 34"><defs><radialGradient id="orb" cx=".5" cy=".9" r=".9"><stop offset="0" stop-color="#5fe0f4"/><stop offset=".5" stop-color="#2a6fa4"/><stop offset="1" stop-color="#b8c8d4"/></radialGradient></defs><circle cx="17" cy="17" r="16" fill="url(#orb)" stroke="#24445c"/><path d="M10 11Q13 8 16 10L15 16Q12 14 9 16Z" fill="#e8622c"/><path d="M17.500 10.500Q21 12 24.500 10L23.500 16Q20 18 16.500 16.500Z" fill="#8cc43c"/><path d="M9 17.500Q12 16 15 17.500L14 23Q11 21.500 8 23Z" fill="#3f9be4"/><path d="M16.300 18Q20 19.500 23.300 17.500L22 23.500Q19 25 15.300 23.500Z" fill="#fbc52c"/></svg></button>
    <button class="quick" aria-label="浏览器"><svg viewBox="0 0 16 16"><circle cx="8" cy="8" r="7" fill="#8fb9e6" stroke="#d8e8f8"/><circle cx="8" cy="7" r="4" fill="#d4e8fa"/><path d="M5 11Q8 14 11 11" stroke="#3a70b4" fill="none" stroke-width="1.500"/></svg></button>
    <div class="tasks">
      <button class="task"><svg class="i14" viewBox="0 0 14 14"><path d="M2 1L6 2V13L2 12Z" fill="#f8e088"/><path d="M6 3L11 1V12L6 13Z" fill="#e8bc4c"/></svg>Inkscape</button>
      <button class="task drive"><svg class="i14" viewBox="0 0 14 14"><path d="M3 5H12L14 9H0Z" fill="#eee"/><path d="M0 9H14V12H0Z" fill="#bbb"/></svg>软件 (D:)</button>
      <button class="task active"><svg class="i14"><use href="#ink"/></svg>新建文档 1 - Inksca...</button>
    </div>
    <div class="tray">
      <svg viewBox="0 0 16 16"><path d="M1 4H15V12H1Z" fill="#ccc"/><path d="M3 6.500H13M3 8.500H13M5 10.500H11" stroke="#888" stroke-dasharray="1 1"/></svg>
      <svg viewBox="0 0 16 16"><circle cx="8" cy="8" r="7" fill="#c82a10"/><path d="M3 5L7 7H9L13 5L12 10L8 13L4 10Z" fill="#240800"/><path d="M5 8H7M9 8H11" stroke="#f84"/></svg>
      <svg viewBox="0 0 16 16"><rect x="1" y="1" width="9" height="9" fill="#7d3ca0"/><path d="M3 9V3L7 9V3M8 6L14 14M14 7L8 14" stroke="#eee" stroke-width="1.300" fill="none"/><circle cx="7" cy="14" r="1.500" fill="#eee"/><circle cx="14" cy="14" r="1.500" fill="#eee"/></svg>
      <svg viewBox="0 0 16 16"><path d="M3 9L9 4L14 5V10L8 12Z" fill="#b87850"/><path d="M1 5H4M2 13H5M12 12H15" stroke="#38b8d8" stroke-width="3"/></svg>
      <svg viewBox="0 0 16 16"><rect x="3" y="3" width="7" height="12" fill="none" stroke="#eee" stroke-width="1.500"/><path d="M5 1H8V3H5Z" fill="#eee"/><path d="M8 6H15V9L13 11H10L8 9ZM11 11V14" fill="#eee" stroke="#333"/><path d="M10 3V6M13 3V6" stroke="#eee" stroke-width="1.500"/></svg>
      <svg viewBox="0 0 16 16"><path d="M2 14V12M5 14V10M8 14V8M11 14V5M14 14V3" stroke="#f0f0f0" stroke-width="2"/></svg>
      <svg viewBox="0 0 16 16"><path d="M1 6H4L8 2V14L4 10H1Z" fill="#eee"/><path d="M10 5Q12 8 10 11M12 3Q15 8 12 13" fill="none" stroke="#bbb" stroke-width="1.200"/></svg>
      <svg viewBox="0 0 16 16"><path d="M3 1V15" stroke="#eee" stroke-width="1.500"/><path d="M4 2H9V4H14V10H9V8H4Z" fill="#f4f4f4"/></svg>
    </div>
    <time>8:54</time>
    <button class="desk" aria-label="显示桌面"></button>
  </div>
</div>
</body>
</html>
```
FILE: styles.css
```css
* { box-sizing: border-box; }
html, body { height: 100%; }
body {
  margin: 0;
  padding: 0 64px;
  background: #000;
  color: #1c1c1c;
  font: 11px/16px "Noto Sans", "Noto Sans CJK SC", sans-serif;
  overflow: hidden;
}
button, input, select { font: inherit; color: inherit; margin: 0; padding: 0; border: 0; background: none; border-radius: 0; }
button { display: flex; align-items: center; justify-content: center; white-space: nowrap; }
u { text-underline-offset: 1px; }
.defs { position: absolute; }
.i14 { width: 14px; height: 14px; flex: none; }

.screen { position: relative; height: 100%; display: flex; flex-direction: column; background: #eee; }

/* main window title */
.titlebar {
  height: 20px; display: flex; align-items: center; padding-left: 4px; gap: 5px;
  background: linear-gradient(90deg, #6c7a80 0, #8a9498 90px, #2a3338 150px, #04090e 200px, #15222f 300px, #0b141e 400px, #1c2a3c 560px, #26324a 700px, #10161e 790px, #2c2426 950px, #1d2226 1040px);
  border-bottom: 1px solid #333;
}
.glow { color: #111; text-shadow: 0 0 6px #c8d0d4, 0 0 8px #c8d0d4, 0 0 4px #b8c0c4; }
.winbtns { margin-left: auto; margin-right: 3px; align-self: flex-start; display: flex; height: 16px; border: 1px solid #7c868c; border-top: 0; border-radius: 0 0 4px 4px; }
.winbtns button { width: 24px; background: linear-gradient(#5c666c, #2c343a); }
.winbtns button + button { border-left: 1px solid #7c868c; }
.winbtns .wide { width: 42px; }

.menubar { height: 19px; display: flex; background: linear-gradient(#f8fcfe, #e2e9f3 60%, #dce5f0); border-bottom: 1px solid #c0c8d2; }
.menubar button { padding: 0 6px 0 7px; }

.bar { display: flex; align-items: center; padding-left: 1px; border-bottom: 1px solid #bcc4ce; }
.bar > button { width: 24px; height: 24px; flex: none; }
.bar svg, .status button svg { width: 18px; height: 18px; }
.sep { width: 1px; height: 20px; margin: 0 4px; background: #a9b2bd; flex: none; }
.cmds { height: 27px; background: linear-gradient(#f6fcff, #d9e3ef 40%, #e2eaf4); }
.ctrl { height: 38px; background: linear-gradient(#f4fbff, #d3deec 30%, #dde7f3); }

/* spin fields */
.field { display: flex; align-items: center; }
.field b { width: 18px; text-align: center; font-weight: 400; }
.field + .field { margin-left: 1px; }
.dim { color: #888; }
.spin { display: flex; height: 22px; gap: 1px; }
.spin input { width: 77px; height: 22px; padding: 0 4px 2px 3px; border: 1px solid #b4b4b4; background: #fff; }
.s40 input { width: 40px; }
.dim input { background: #f2f2f2; }
.steps { width: 9px; display: flex; flex-direction: column; border: 1px solid #b8b8b8; background: #eee; }
.steps i { flex: 1; display: flex; align-items: center; justify-content: center; }
.steps i + i { border-top: 1px solid #b8b8b8; }
.steps i::before { content: ""; border: 2px solid transparent; border-top: 0; border-bottom: 3px solid #777; }
.steps i + i::before { border-bottom: 0; border-top: 3px solid #777; }
.steps.blue i, .steps.low i + i { background: #dfe8f6; }
.steps.blue i::before { border-bottom-color: #5a78b8; }
.steps.blue i + i::before, .steps.low i + i::before { border-top-color: #5a78b8; }

/* drop-downs */
.drop { position: relative; display: flex; width: 48px; height: 20px; flex: none; }
.drop select { appearance: none; width: 100%; padding: 0 17px 1px 3px; border: 1px solid #a8a8a8; background: #fff; }
.drop::before { content: ""; position: absolute; inset: 0 0 0 auto; width: 17px; border: 1px solid #777; background: linear-gradient(#fafafa, #d4d4d4); pointer-events: none; }
.drop::after { content: ""; position: absolute; right: 5px; top: 8px; border: 4px solid transparent; border-top: 4px solid #111; border-bottom: 0; pointer-events: none; }
.ctrl .drop { width: 41px; margin-left: 1px; }
.ctrl .lockbtn { margin: 0 1px 0 2px; }
.ctrl .late { margin-left: 6px; }
.affect { margin: 0 7px; }
.toggles { display: flex; align-self: flex-end; }
.toggles button { width: 24px; height: 34px; margin-right: -1px; border: 1px solid #566; border-bottom: 0; border-radius: 3px 3px 0 0; background: linear-gradient(#b4bdc8, #cad4e0); }

/* middle */
.middle { flex: 1; min-height: 0; display: flex; }
.toolbox { width: 30px; padding: 2px 1px 0; background: linear-gradient(90deg, #e8eff7, #d4e0ee); overflow: hidden; }
.toolbox button { width: 28px; height: 27px; }
.toolbox svg { width: 24px; height: 24px; }
.toolbox .on, .snapbar .on { border: 1px solid #667280; border-radius: 3px; background: #bfccdb; box-shadow: inset 0 0 2px #8895a4; }
.work { flex: 1; min-width: 0; display: grid; grid-template: 16px 1fr 18px / 16px 1fr 38px; }
.hruler { grid-area: 1 / 2 / 2 / 4; width: 100%; height: 16px; padding-right: 24px; }
.vruler { grid-area: 2 / 1 / 3 / 2; width: 16px; height: 100%; }
.hruler text, .vruler text { font-size: 8px; fill: #224; }
.canvas { grid-area: 2 / 2 / 3 / 3; width: 100%; height: 100%; background: #fff; }
.hscroll { grid-area: 3 / 2 / 4 / 3; display: flex; align-items: center; gap: 8px; padding: 0 2px 3px 4px; border-top: 1px solid #aaa; }
.hscroll .thumb, .palscroll .thumb { height: 13px; border: 1px solid #999; background: linear-gradient(#f4f4f4, #d2d2d2); }
.hscroll .thumb { flex: 1; }
.vscroll { grid-area: 1 / 3 / 4 / 4; display: flex; flex-direction: column; align-items: center; padding: 2px 0 1px 6px; }
.vscroll .up { margin: 6px 0 4px; }
.track { flex: 1; width: 15px; background: #ececec; display: flex; justify-content: center; padding-top: 130px; }
.vscroll .thumb { width: 13px; height: 199px; border: 1px solid #999; background: linear-gradient(90deg, #f6f6f6, #ccc); display: flex; align-items: center; justify-content: center; }
.vscroll .thumb i { width: 6px; height: 7px; background: repeating-linear-gradient(#666 0 1px, transparent 1px 3px); }
.cms { margin-top: 8px; }
.ar { width: 0; height: 0; border: 3px solid transparent; flex: none; }
.ar.left { border-right: 4px solid #777; border-left: 0; }
.ar.right { border-left: 4px solid #777; border-right: 0; }
.ar.up { border-bottom: 4px solid #555; border-top: 0; }
.ar.down { border-top: 4px solid #555; border-bottom: 0; }
.snapbar { width: 28px; display: flex; flex-direction: column; align-items: center; padding-top: 2px; background: #d5e1ef; border-left: 1px solid #a8b0b8; }
.snapbar button { width: 23px; height: 23px; }
.snapbar .on { height: 24px; }
.snapbar svg { width: 16px; height: 16px; }
.snapbar > i { width: 15px; height: 1px; margin: 5px 0 6px; background: #f8fbff; border-bottom: 1px solid #aab; }

/* palette */
.palette { position: relative; height: 18px; display: grid; grid-template-columns: repeat(74, 1fr); margin: 0 1px; padding-right: 13px; border-top: 2px solid #111; border-bottom: 1px solid #fff; }
.palette .none { width: 100%; height: 15px; }
.palette .more { position: absolute; right: 5px; top: 2px; border-right-color: #111; }
.c0 { background: #000; } .c1 { background: #1a1a1a; } .c2 { background: #333; } .c3 { background: #4d4d4d; } .c4 { background: #666; }
.c5 { background: #808080; } .c6 { background: #999; } .c7 { background: #b3b3b3; } .c8 { background: #ccc; } .c9 { background: #e6e6e6; }
.c10 { background: #ececec; } .c11 { background: #f2f2f2; } .c12 { background: #f9f9f9; } .c13 { background: #fff; }
.d0 { background: #6a0000; } .d1 { background: #d00000; } .d2 { background: #7c6400; } .d3 { background: #ecc000; } .d4 { background: #108000; } .d5 { background: #22ff00; }
.d6 { background: #1ea08c; } .d7 { background: #2cffff; } .d8 { background: #0a1ea0; } .d9 { background: #1040ff; } .d10 { background: #6a0896; } .d11 { background: #d80cff; }
.r0 { background: #200000; } .r1 { background: #480000; } .r2 { background: #680000; } .r3 { background: #840000; } .r4 { background: #a40000; } .r5 { background: #c00000; }
.k0 { background: #c08870; grid-column: 71; } .k1 { background: #d09c84; } .k2 { background: #e0b8a4; } .k3 { background: #ecd8cc; border-right: 3px solid #222; }
.palscroll { height: 16px; display: flex; align-items: center; padding: 0 18px 0 5px; gap: 7px; }
.palscroll .thumb { width: 188px; display: flex; align-items: center; justify-content: center; }
.palscroll .thumb i { width: 8px; height: 6px; background: repeating-linear-gradient(90deg, #666 0 1px, transparent 1px 3px); }
.palscroll .right { margin-left: auto; }

/* status bar */
.status { height: 29px; display: flex; align-items: center; padding-left: 2px; overflow: hidden; }
.status dl { margin: 0; display: grid; grid-template-columns: 52px 50px; line-height: 14px; }
.status dd { margin: 0; }
.opac { margin-left: 9px; gap: 2px; }
.opac input { width: 24px; padding: 0 1px 1px; color: #a87840; }
.opac { color: #333; }
.status .sep { height: 29px; margin: 0 1px 0 3px; }
.status button { width: 19px; }
.layer { width: 66px; height: 26px; margin: 0 6px 0 0; font-weight: 700; }
.layer::after { top: 11px; }
.layer select { padding-left: 1px; padding-right: 10px; }
.msg { white-space: nowrap; flex: 1; min-width: 0; overflow: hidden; }
.zoom input { width: 38px; border-width: 1px 0; }
.grip { width: 14px; height: 14px; margin-left: 3px; align-self: flex-end; }

/* dialog window */
.dialog {
  position: absolute; left: 498px; right: 65px; top: 101px; bottom: 27px;
  display: flex; flex-direction: column; padding: 0 6px;
  border: 1px solid #3a4650; border-bottom: 0; border-radius: 6px 6px 0 0;
  background: linear-gradient(#b4dcf2 0, #cdeaf6 160px, #86aec6 170px, #b8d8e8 440px, #9ccbe2);
  box-shadow: 0 0 14px 3px rgba(0, 0, 0, .75);
}
.dtitle { height: 27px; display: flex; align-items: center; gap: 5px; background: linear-gradient(90deg, #d4ecf6, #a4d4ee 40%, #a2d8ee 80%, #bfe4f2); margin: 0 -6px; padding: 0 6px 2px; border-radius: 6px 6px 0 0; box-shadow: inset 0 1px #e8f8ff; }
.dbtns { margin-left: auto; align-self: flex-start; display: flex; height: 17px; border: 1px solid #52626c; border-top: 0; border-radius: 0 0 4px 4px; overflow: hidden; }
.dbtns button { width: 25px; background: linear-gradient(#e4f0f4, #b4c8d2); border-right: 1px solid #52626c; }
.dbtns .close { width: 41px; border: 0; background: linear-gradient(#d89088, #b82420 50%, #d85048); }
.dbody { flex: 1; min-height: 0; display: flex; flex-direction: column; background: #eee; padding-right: 4px; padding-left: 3px; border: 1px solid #667780; border-bottom: 0; }
.dockhead { height: 18px; display: flex; align-items: center; gap: 2px; margin: 0 -4px 0 -3px; padding: 0 5px 1px 3px; background: #a5a5a5; }
.dockhead button { width: 10px; margin-left: 7px; }
.dockhead span { margin-right: auto; }
.tabs { display: flex; align-items: flex-end; height: 28px; flex: none; }
.tabs button { height: 22px; padding: 0 4px; border: 1px solid #999; border-left: 0; background: linear-gradient(#f2f2f2, #dadada); }
.tabs .cur { height: 25px; padding: 0 5px; border: 1px solid #999; border-bottom: 0; background: #fff; position: relative; margin-bottom: -1px; }
.page { flex: 1; min-height: 0; border: 1px solid #b0b0b0; border-bottom: 0; background: #fff; padding: 3px 3px 0; }
h2 { margin: 0; font-size: 11px; line-height: 16px; font-weight: 700; }
.mt { margin-top: 12px; }
.mt2 { margin-top: 14px; }
.row { display: flex; align-items: center; justify-content: flex-end; }
.unit { gap: 10px; padding-right: 5px; margin-top: 2px; }
.color { display: grid; grid-template-columns: 296px 1fr; column-gap: 6px; align-items: center; height: 22px; }
.color span { text-align: right; }
.last { height: 20px; }
.checker { width: 50%; height: 11px; background: repeating-conic-gradient(#777 0 25%, #b4b4b4 0 50%) 0 0 / 8px 8px; }
.solid { height: 10px; margin-right: 4px; background: #646464; }
.list { display: flex; height: 81px; margin: 1px 0 0 15px; border: 1px solid #aaa; }
.scroller { flex: 1; overflow: hidden; }
table { width: 100%; border-collapse: collapse; }
td { height: 23px; padding: 0 4px; line-height: 22px; }
td:first-child { width: 140px; }
.sel { background: #eee; }
.lscroll { width: 15px; display: flex; flex-direction: column; align-items: center; padding: 6px 0 5px; background: #f2f2f2; }
.lscroll .thumb { width: 13px; height: 6px; margin: 7px 0 auto; border: 1px solid #aaa; background: #ddd; }
.orient { margin-left: 15px; padding-right: 6px; height: 18px; margin-top: 5px; gap: 13px; }
.orient .name { margin-right: auto; }
.orient label, .check { display: flex; align-items: center; gap: 6px; }
input[type=radio] { appearance: none; width: 11px; height: 11px; border: 1px solid #888; border-radius: 50%; background: #eee; }
input[type=radio]:checked { background: radial-gradient(#17607c 0 3px, #e4eef2 4px); }
fieldset { margin: 3px 0 0 15px; padding: 4px 0 7px; border: 1px solid #b0b0b0; display: flex; flex-direction: column; gap: 4px; min-width: 0; }
legend { margin-left: 3px; padding: 0 1px; }
.size { display: grid; grid-template-columns: 187px auto 1fr auto; column-gap: 10px; align-items: center; padding-right: 10px; }
.size label { text-align: right; }
.expander { align-self: flex-start; height: 18px; gap: 5px; margin-left: 8px; }
.expander i { width: 8px; height: 8px; border: 1px solid #999; background: linear-gradient(#777, #777) center / 4px 1px no-repeat; }
.mid { display: flex; justify-content: center; align-items: center; gap: 11px; }
.sides { display: flex; justify-content: space-between; padding: 0 14px; }
.sides div { display: flex; align-items: center; gap: 11px; }
.push { height: 24px; padding: 0 3px; border: 1px solid #777; border-radius: 2px; background: linear-gradient(#f4f4f4, #cfcfcf); }
.check { margin-left: 17px; height: 21px; gap: 5px; }
.check input { appearance: none; width: 12px; height: 12px; border: 1px solid #999; background: #f0f0f0; display: flex; justify-content: center; }
.check input:checked::after { content: ""; width: 4px; height: 8px; border: solid #5a6890; border-width: 0 2px 2px 0; transform: rotate(38deg); }
.cursor { position: absolute; left: 882px; top: 443px; }

/* taskbar */
.taskbar { position: relative; height: 27px; display: flex; align-items: stretch; padding-left: 65px; background: linear-gradient(#1c272c, #0c1114 50%, #020303); border-top: 1px solid #50606c; }
.orb { position: absolute; left: 7px; top: -5px; width: 34px; height: 34px; }
.orb svg { width: 34px; height: 34px; }
.quick { width: 16px; margin-right: 15px; }
.quick svg { width: 16px; height: 16px; }
.tasks { display: flex; flex: none; }
.task { width: 143px; justify-content: flex-start; gap: 4px; padding-left: 6px; color: #f0f0f0; border: 1px solid #70787c; border-right: 0; background: linear-gradient(170deg, #707880, #2c3236 50%, #14181a); }
.drive { border-left: 0; border-right: 1px solid #70787c; padding-left: 8px; margin-right: 3px; }
.active { border: 1px solid #a4acb0; background: linear-gradient(170deg, #a8b0b4, #70787c 50%, #585e62); }
.tray { flex: 1; display: flex; justify-content: flex-end; align-items: center; gap: 6px; background: linear-gradient(90deg, transparent 93%, #0e1417), linear-gradient(#728fa6, #26394a 40%, #060c12); padding-right: 20px; }
.tray svg { width: 16px; height: 16px; }
.tray svg:first-child { margin-right: 6px; }
time { color: #fff; display: flex; align-items: center; padding-right: 14px; }
.desk { width: 19px; margin-right: 2px; border: 1px solid #556; background: linear-gradient(135deg, #555, #111); }
```
